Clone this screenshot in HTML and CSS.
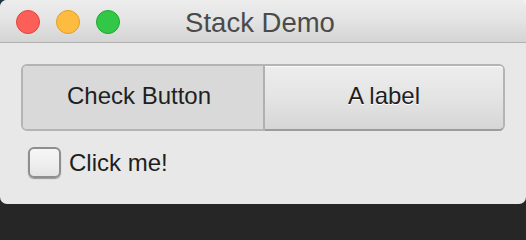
FILE: index.html
```html
<!DOCTYPE html>
<html>
<head>
<meta charset="utf-8">
<title>Stack Demo</title>
<link rel="stylesheet" href="styles.css">
</head>
<body>
<div class="window">
  <header class="titlebar">
    <div class="lights">
      <span class="light red"></span>
      <span class="light yellow"></span>
      <span class="light green"></span>
    </div>
    <div class="title">Stack Demo</div>
    <div class="spacer"></div>
  </header>
  <main class="content">
    <div class="segmented">
      <div class="segment active">Check Button</div>
      <div class="segment normal">A label</div>
    </div>
    <label class="check-row">
      <span class="checkbox"></span>
      <span class="check-label">Click me!</span>
    </label>
  </main>
</div>
</body>
</html>
```
FILE: styles.css
```css
html, body {
  margin: 0;
  padding: 0;
}
body {
  width: 526px;
  height: 204px;
  background:
    linear-gradient(to right, #1c3840 0, #1c3840 50%, #f2f2f2 50%, #f2f2f2 100%) top / 100% 12px no-repeat,
    #262626;
  font-family: "Liberation Sans", Arial, Helvetica, sans-serif;
  overflow: hidden;
}
.window {
  width: 526px;
  height: 204px;
  background: #e8e8e8;
  border-radius: 7px;
  overflow: hidden;
}
.titlebar {
  box-sizing: border-box;
  height: 43px;
  border-bottom: 1px solid #b0b0b0;
  background: linear-gradient(to bottom, #ededed 0%, #e3e3e3 50%, #d4d4d4 100%);
  display: grid;
  grid-template-columns: 1fr auto 1fr;
  align-items: start;
}
.lights {
  display: flex;
  gap: 16px;
  padding: 10px 0 0 16px;
}
.light {
  box-sizing: border-box;
  width: 24px;
  height: 24px;
  border-radius: 50%;
  border: 1px solid;
}
.red { background: #fc5f57; border-color: #e0443e; }
.yellow { background: #fdbb3f; border-color: #dea123; }
.green { background: #33c748; border-color: #1aab29; }
.title {
  font-size: 27.5px;
  line-height: 45px;
  color: #4b4b4b;
  margin-left: -6px;
}
.content {
  padding: 21px 21px 0 21px;
}
.segmented {
  box-sizing: border-box;
  height: 67px;
  display: flex;
  border: 2px solid #b4b4b4;
  border-radius: 6px;
}
.segment {
  display: flex;
  align-items: center;
  justify-content: center;
  box-sizing: border-box;
  padding-bottom: 4px;
  font-size: 24px;
  color: #1f1f1f;
}
.active {
  width: 242px;
  padding-right: 8px;
  background: #d9d9d9;
  border-right: 2px solid #b0b0b0;
  border-radius: 4px 0 0 4px;
}
.normal {
  flex: 1;
  background: linear-gradient(to bottom, #ededed 0%, #e4e4e4 50%, #d6d6d6 100%);
  box-shadow: inset 0 1px 0 #fafafa, 0 2px 0 #9c9c9c;
  border-radius: 0 4px 4px 0;
  text-shadow: 0 1px 0 #ffffff;
}
.check-row {
  display: flex;
  align-items: center;
  gap: 8px;
  margin: 16px 0 0 7px;
}
.checkbox {
  box-sizing: border-box;
  width: 33px;
  height: 31px;
  border: 2px solid #8e8e8e;
  border-radius: 6px;
  background: linear-gradient(to bottom, #f6f6f6 0%, #eeeeee 60%, #e4e4e4 100%);
  box-shadow: 0 1px 1px rgba(0, 0, 0, 0.35);
}
.check-label {
  font-size: 24px;
  color: #1e1e1e;
}
```
